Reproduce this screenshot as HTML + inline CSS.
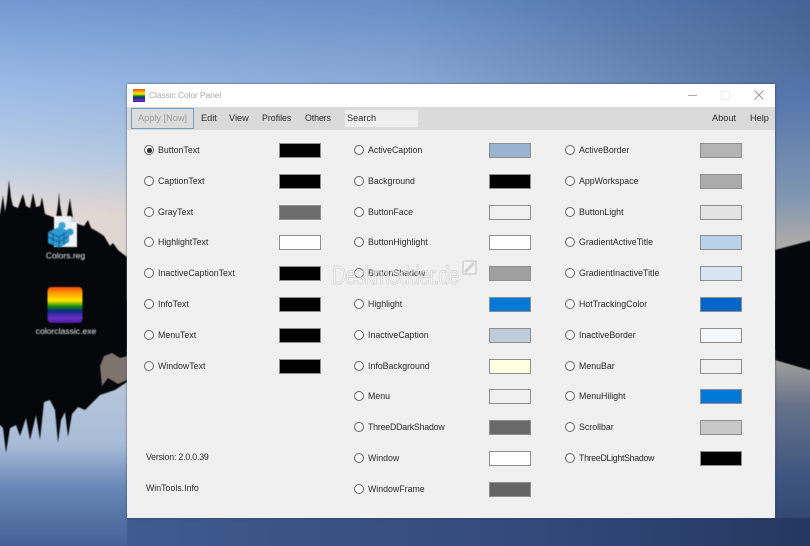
<!DOCTYPE html>
<html><head><meta charset="utf-8"><style>
html,body{margin:0;padding:0;width:810px;height:546px;overflow:hidden;background:#3f5a90}
body{position:relative;font-family:"Liberation Sans",sans-serif;font-size:8.8px;color:#2a2a2a}
svg.bg{position:absolute;left:-10px;top:-10px;filter:blur(.5px)}
#w{position:absolute;left:127px;top:84px;width:648px;height:434px;background:#f0f0f0;box-shadow:0 0 2px rgba(40,50,70,.8);filter:blur(.25px)}
#t{position:absolute;left:0;top:0;width:648px;height:23px;background:#fff}
#m{position:absolute;left:0;top:23px;width:648px;height:23px;background:#dadada}
.a{position:absolute;white-space:nowrap;line-height:12px}
.n{font-size:9.2px}
.r{position:absolute;width:8px;height:8px;margin:.25px;border:1px solid #666;border-radius:50%;background:#f8f8f8}
.s{position:absolute;width:40px;height:13px;border:1px solid #8f8f8f}
</style></head><body>
<svg class="bg" width="830" height="566" viewBox="-10 -10 830 566">
<defs>
<linearGradient id="sky" x1="0" y1="0" x2="0" y2="1"><stop offset="0" stop-color="#6f95cf"/><stop offset=".3" stop-color="#9abae7"/><stop offset=".55" stop-color="#bccfe6"/><stop offset=".72" stop-color="#e8dcd6"/><stop offset="1" stop-color="#e8dcd6"/></linearGradient>
<linearGradient id="dark" x1="0" y1="0" x2="1" y2="0"><stop offset="0" stop-color="#24406f" stop-opacity="0"/><stop offset=".5" stop-color="#24406f" stop-opacity=".14"/><stop offset="1" stop-color="#24406f" stop-opacity=".62"/></linearGradient>
<linearGradient id="lake" x1="0" y1="0" x2="0" y2="1"><stop offset="0" stop-color="#c0cbdc"/><stop offset=".46" stop-color="#a8bcd8"/><stop offset=".66" stop-color="#6a88b8"/><stop offset="1" stop-color="#3f5a90"/></linearGradient>
<linearGradient id="lakeR" x1="0" y1="0" x2="0" y2="1"><stop offset="0" stop-color="#a8a6a0"/><stop offset=".25" stop-color="#66728a"/><stop offset=".6" stop-color="#3f5580"/><stop offset="1" stop-color="#2a3e68"/></linearGradient>
<linearGradient id="skyR" x1="0" y1="0" x2="0" y2="1"><stop offset="0" stop-color="#4f73ac" stop-opacity="0"/><stop offset=".2" stop-color="#5577ad"/><stop offset=".7" stop-color="#8096b0"/><stop offset="1" stop-color="#b8b0a8"/></linearGradient>
<linearGradient id="strip" x1="0" y1="0" x2="1" y2="0"><stop offset="0" stop-color="#3f5b90"/><stop offset=".6" stop-color="#34497a"/><stop offset="1" stop-color="#243760"/></linearGradient>
<linearGradient id="rb" x1="0" y1="0" x2="0" y2="1"><stop offset="0" stop-color="#f04a10"/><stop offset=".16" stop-color="#ff9800"/><stop offset=".38" stop-color="#ffe800"/><stop offset=".54" stop-color="#0c8a10"/><stop offset=".66" stop-color="#0a2a80"/><stop offset=".86" stop-color="#6a30c8"/><stop offset="1" stop-color="#4a1a9a"/></linearGradient>
</defs>
<rect x="-10" y="-10" width="830" height="310" fill="url(#sky)"/>
<rect x="-10" y="-10" width="830" height="310" fill="url(#dark)"/>
<rect x="775" y="60" width="45" height="195" fill="url(#skyR)"/>
<rect x="-10" y="350" width="830" height="206" fill="url(#lake)"/>
<rect x="775" y="355" width="45" height="201" fill="url(#lakeR)"/>
<rect x="127" y="518" width="693" height="38" fill="url(#strip)"/>
<polygon points="775,250 820,238 820,373 775,360" fill="#05070c"/>
<polygon fill="#04060a" points="-10,214 0,214 3,195 5,212 7,200 9,180 11,198 13,206 18,208 23,194 26,206 30,208 33,193 36,207 40,206 42,197 45,214 50,216 56,218 58,205 59,192 60,205 62,216 67,216 69,204 70,198 71,206 73,218 78,224 84,226 88,220 91,228 98,232 104,236 110,246 113,243 118,250 127,257 127,382 115,390 100,395 93,402 85,410 78,407 72,414 68,437 65,412 61,420 58,443 55,410 50,400 44,402 40,440 36,415 30,440 26,418 20,436 16,425 10,428 6,453 3,428 0,425 -10,425"/>
<polygon fill="#a59a8f" opacity=".75" points="100,366 104,356 112,353 120,358 127,356 127,380 118,384 108,378 102,386"/>
<polygon points="54,216 71,216 77,222 77,247 54,247" fill="#eef3f6"/>
<polygon points="71,216 71,222 77,222" fill="#c8d0d8"/>
<path d="M48 232l11-5 10 4 0 11-10 6-11-5z" fill="#2d9bcf"/>
<path d="M48 232l11 5 10-6M59 237v11M53 234v11M64 234v11M48 237l11 5 10-6" stroke="#0e5f96" stroke-width="1" fill="none"/>
<circle cx="62" cy="225.500" r="3.500" fill="#3aa6d8"/><circle cx="70" cy="232" r="3.500" fill="#2f97cb"/>
<rect x="47.500" y="287" width="35" height="36" rx="4" fill="url(#rb)"/>
<text x="65.500" y="258.500" text-anchor="middle" font-family="Liberation Sans" font-size="8.500" fill="#eee">Colors.reg</text>
<text x="66" y="334" text-anchor="middle" font-family="Liberation Sans" font-size="8.600" fill="#eee">colorclassic.exe</text>
</svg>
<div id="w">
<div id="t"></div><div id="m"></div>
<svg style="position:absolute;left:6px;top:5px" width="12" height="13"><rect width="12" height="13" fill="url(#rb)"/></svg>
<div class="a" style="left:22px;top:5px;color:#aaa;letter-spacing:-.15px;font-size:8.600px">Classic Color Panel</div>
<div style="position:absolute;left:561px;top:11px;width:9px;height:1px;background:#aaa"></div>
<div style="position:absolute;left:594px;top:7px;width:7px;height:7px;border:1px solid #ececec"></div>
<svg style="position:absolute;left:627px;top:6px" width="10" height="10"><path d="M.5.5l9 9M9.500.5l-9 9" stroke="#999" stroke-width="1" fill="none"/></svg>
<div style="position:absolute;left:4px;top:24px;width:61px;height:19px;border:1.500px solid #6f9ec4;background:#dcdcdc"></div>
<div class="a n" style="left:11px;top:28px;color:#9a9a9a">Apply [Now]</div>
<div class="a n" style="left:74px;top:28px">Edit</div>
<div class="a n" style="left:102px;top:28px">View</div>
<div class="a" style="left:135px;top:28px">Profiles</div>
<div class="a" style="left:178px;top:28px;letter-spacing:-.1px">Others</div>
<div style="position:absolute;left:218px;top:26px;width:73px;height:17px;background:#eeeeee"></div>
<div class="a n" style="left:220px;top:28px">Search</div>
<div class="a n" style="left:585px;top:28px">About</div>
<div class="a n" style="left:623px;top:28px">Help</div>

<div class="r" style="left:17px;top:61px"></div><div style="position:absolute;left:20px;top:64px;width:4.500px;height:4.500px;background:#333;border-radius:50%"></div>
<div class="a" style="left:31px;top:60px">ButtonText</div><div class="s" style="left:152px;top:59px;background:#000"></div>
<div class="r" style="left:17px;top:92px"></div><div class="a" style="left:31px;top:91px">CaptionText</div><div class="s" style="left:152px;top:90px;background:#000"></div>
<div class="r" style="left:17px;top:123px"></div><div class="a" style="left:31px;top:122px">GrayText</div><div class="s" style="left:152px;top:121px;background:#6d6d6d"></div>
<div class="r" style="left:17px;top:153px"></div><div class="a" style="left:31px;top:152px">HighlightText</div><div class="s" style="left:152px;top:151px;background:#fff"></div>
<div class="r" style="left:17px;top:184px"></div><div class="a" style="left:31px;top:183px">InactiveCaptionText</div><div class="s" style="left:152px;top:182px;background:#000"></div>
<div class="r" style="left:17px;top:215px"></div><div class="a" style="left:31px;top:214px">InfoText</div><div class="s" style="left:152px;top:213px;background:#000"></div>
<div class="r" style="left:17px;top:246px"></div><div class="a" style="left:31px;top:245px">MenuText</div><div class="s" style="left:152px;top:244px;background:#000"></div>
<div class="r" style="left:17px;top:277px"></div><div class="a" style="left:31px;top:276px">WindowText</div><div class="s" style="left:152px;top:275px;background:#000"></div>
<div class="a" style="left:19px;top:367px;letter-spacing:-.2px">Version: 2.0.0.39</div>
<div class="a" style="left:19px;top:398px">WinTools.Info</div>

<div class="r" style="left:227px;top:61px"></div><div class="a" style="left:241px;top:60px">ActiveCaption</div><div class="s" style="left:362px;top:59px;background:#99b4d1"></div>
<div class="r" style="left:227px;top:92px"></div><div class="a" style="left:241px;top:91px">Background</div><div class="s" style="left:362px;top:90px;background:#000"></div>
<div class="r" style="left:227px;top:123px"></div><div class="a" style="left:241px;top:122px">ButtonFace</div><div class="s" style="left:362px;top:121px;background:#f0f0f0"></div>
<div class="r" style="left:227px;top:153px"></div><div class="a" style="left:241px;top:152px">ButtonHighlight</div><div class="s" style="left:362px;top:151px;background:#fff"></div>
<div class="r" style="left:227px;top:184px"></div><div class="a" style="left:241px;top:183px">ButtonShadow</div><div class="s" style="left:362px;top:182px;background:#a0a0a0"></div>
<div class="r" style="left:227px;top:215px"></div><div class="a" style="left:241px;top:214px">Highlight</div><div class="s" style="left:362px;top:213px;background:#0078d7"></div>
<div class="r" style="left:227px;top:246px"></div><div class="a" style="left:241px;top:245px">InactiveCaption</div><div class="s" style="left:362px;top:244px;background:#bfcddb"></div>
<div class="r" style="left:227px;top:277px"></div><div class="a" style="left:241px;top:276px">InfoBackground</div><div class="s" style="left:362px;top:275px;background:#ffffe1"></div>
<div class="r" style="left:227px;top:307px"></div><div class="a" style="left:241px;top:306px">Menu</div><div class="s" style="left:362px;top:305px;background:#f0f0f0"></div>
<div class="r" style="left:227px;top:338px"></div><div class="a" style="left:241px;top:337px;letter-spacing:-.2px">ThreeDDarkShadow</div><div class="s" style="left:362px;top:336px;background:#696969"></div>
<div class="r" style="left:227px;top:369px"></div><div class="a" style="left:241px;top:368px">Window</div><div class="s" style="left:362px;top:367px;background:#fff"></div>
<div class="r" style="left:227px;top:400px"></div><div class="a" style="left:241px;top:399px">WindowFrame</div><div class="s" style="left:362px;top:398px;background:#646464"></div>

<div class="r" style="left:438px;top:61px"></div><div class="a" style="left:452px;top:60px">ActiveBorder</div><div class="s" style="left:573px;top:59px;background:#b4b4b4"></div>
<div class="r" style="left:438px;top:92px"></div><div class="a" style="left:452px;top:91px">AppWorkspace</div><div class="s" style="left:573px;top:90px;background:#ababab"></div>
<div class="r" style="left:438px;top:123px"></div><div class="a" style="left:452px;top:122px">ButtonLight</div><div class="s" style="left:573px;top:121px;background:#e3e3e3"></div>
<div class="r" style="left:438px;top:153px"></div><div class="a" style="left:452px;top:152px">GradientActiveTitle</div><div class="s" style="left:573px;top:151px;background:#b9d1ea"></div>
<div class="r" style="left:438px;top:184px"></div><div class="a" style="left:452px;top:183px">GradientInactiveTitle</div><div class="s" style="left:573px;top:182px;background:#d7e4f2"></div>
<div class="r" style="left:438px;top:215px"></div><div class="a" style="left:452px;top:214px">HotTrackingColor</div><div class="s" style="left:573px;top:213px;background:#0066cc"></div>
<div class="r" style="left:438px;top:246px"></div><div class="a" style="left:452px;top:245px">InactiveBorder</div><div class="s" style="left:573px;top:244px;background:#f4f7fc"></div>
<div class="r" style="left:438px;top:277px"></div><div class="a" style="left:452px;top:276px">MenuBar</div><div class="s" style="left:573px;top:275px;background:#f0f0f0"></div>
<div class="r" style="left:438px;top:307px"></div><div class="a" style="left:452px;top:306px">MenuHilight</div><div class="s" style="left:573px;top:305px;background:#0078d7"></div>
<div class="r" style="left:438px;top:338px"></div><div class="a" style="left:452px;top:337px">Scrollbar</div><div class="s" style="left:573px;top:336px;background:#c8c8c8"></div>
<div class="r" style="left:438px;top:369px"></div><div class="a" style="left:452px;top:368px;letter-spacing:-.3px">ThreeDLightShadow</div><div class="s" style="left:573px;top:367px;background:#000"></div>

<div class="a" style="left:205px;top:177px;font-size:26px;line-height:28px;color:rgba(248,248,248,.5);letter-spacing:-1.200px;-webkit-text-stroke:.5px rgba(185,185,185,.8);transform:scaleX(.76);transform-origin:0 0">Deskmodder.de</div>
<svg style="position:absolute;left:335px;top:176px" width="15" height="15"><rect x="1" y="1" width="13" height="13" rx="1" fill="#f4f4f4" stroke="#cfcfcf" stroke-width="1.500"/><path d="M3 12L12 3" stroke="#cfcfcf" stroke-width="3"/></svg>
</div>
</body></html>
